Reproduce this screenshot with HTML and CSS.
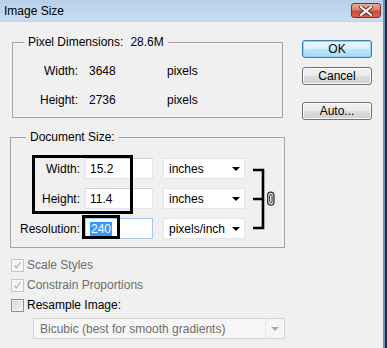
FILE: index.html
```html
<!DOCTYPE html>
<html>
<head>
<meta charset="utf-8">
<link rel="stylesheet" href="styles.css">
</head>
<body>
<div class="window">
  <div class="titlebar">
    <span class="title">Image Size</span>
    <span class="close">
      <svg width="14" height="10" viewBox="0 0 14 10">
        <path d="M2 1L12 9M12 1L2 9" stroke="#5a2a22" stroke-width="4" stroke-linecap="square"/>
        <path d="M2 1L12 9M12 1L2 9" stroke="#fff" stroke-width="2.2" stroke-linecap="square"/>
      </svg>
    </span>
  </div>
  <div class="content">
    <div class="main">
      <fieldset class="group pixdim">
        <legend>Pixel Dimensions:<span class="size">28.6M</span></legend>
        <div class="pgrid">
          <span class="lbl">Width:</span><span>3648</span><span>pixels</span>
          <span class="lbl">Height:</span><span>2736</span><span>pixels</span>
        </div>
      </fieldset>
      <fieldset class="group docsize">
        <legend>Document Size:</legend>
        <div class="dgrid">
          <span class="lbl">Width:</span>
          <div class="field">15.2</div>
          <div class="select">inches<i class="arrow"></i></div>
          <div class="link">
            <svg width="22" height="62" viewBox="0 0 22 62">
              <path d="M0 2H10V60H0M0 31H10" fill="none" stroke="#000" stroke-width="2.6"/>
              <rect x="14.6" y="24.1" width="6.4" height="13" rx="3.2" fill="#d8d8d8" stroke="#2e2e2e" stroke-width="1.2"/>
              <rect x="16.6" y="26.6" width="2.4" height="8" rx="1.2" fill="#f4f4f4" stroke="#2e2e2e" stroke-width="1"/>
            </svg>
          </div>
          <span class="lbl">Height:</span>
          <div class="field">11.4</div>
          <div class="select">inches<i class="arrow"></i></div>
          <span class="lbl">Resolution:</span>
          <div class="field focus"><span class="sel">240</span></div>
          <div class="select">pixels/inch<i class="arrow"></i></div>
        </div>
      </fieldset>
      <div class="checks">
        <label class="check disabled"><span class="cb on"><svg width="11" height="11" viewBox="0 0 11 11"><path d="M2.5 5.5L4.5 8L8.5 2" fill="none" stroke="#b4b4b4" stroke-width="1.3"/></svg></span>Scale Styles</label>
        <label class="check disabled"><span class="cb on"><svg width="11" height="11" viewBox="0 0 11 11"><path d="M2.5 5.5L4.5 8L8.5 2" fill="none" stroke="#b4b4b4" stroke-width="1.3"/></svg></span>Constrain Proportions</label>
        <label class="check"><span class="cb off"></span>Resample Image:</label>
      </div>
      <div class="combo disabled">
        <span class="combo-text">Bicubic (best for smooth gradients)</span>
        <span class="combo-btn"><i class="arrow grey"></i></span>
      </div>
    </div>
    <div class="buttons">
      <div class="btn default">OK</div>
      <div class="btn">Cancel</div>
      <div class="btn auto">Auto...</div>
    </div>
  </div>
  <div class="mark mark-wh"></div>
  <div class="mark mark-res"></div>
</div>
</body>
</html>
```
FILE: styles.css
```css
* { box-sizing: border-box; }

body {
  margin: 0;
  background: #1c3324;
  font-family: "Liberation Sans", Arial, sans-serif;
  font-size: 12px;
  color: #000;
}

.window {
  position: relative;
  width: 385px;
  height: 348px;
  background: #f0f0f0;
  border-right: 2px solid #5f95cb;
  display: flex;
  flex-direction: column;
}

.titlebar {
  flex: none;
  height: 22px;
  display: flex;
  align-items: flex-start;
  justify-content: space-between;
  padding: 3px 2px 0 4px;
  background: linear-gradient(#b7cfe8, #cbdcee);
  border-bottom: 1px solid #c4d3e2;
}

.title {
  line-height: 16px;
  color: #000;
}

.close {
  width: 30px;
  height: 15px;
  border: 1px solid #7a3528;
  border-radius: 3px;
  background: linear-gradient(#eba99a, #dc7d69 48%, #c9482f 52%, #d4644c);
  display: flex;
  align-items: center;
  justify-content: center;
}

.content {
  flex: 1;
  display: flex;
}

.main {
  width: 285px;
  flex: none;
}

.group {
  margin: 0;
  min-width: 0;
  border: 1px solid #a3a3a3;
}

.group legend {
  padding: 0 4px;
  line-height: 15px;
}

.pixdim {
  margin: 13px 0 0 12px;
  width: 271px;
  padding: 11px 0 7px 11px;
}

.size { margin-left: 7px; }

.pgrid {
  display: grid;
  grid-template-columns: 65px 78px auto;
  grid-auto-rows: 20px;
  row-gap: 9px;
  align-items: center;
}

.lbl {
  text-align: right;
  padding-right: 11px;
}

.docsize {
  margin: 12px 0 0 10px;
  width: 275px;
  padding: 13px 0 8px 9px;
}

.docsize legend { margin-left: 6px; }

.dgrid {
  display: grid;
  grid-template-columns: 65px 78px 90px 22px;
  grid-template-rows: repeat(3, 21px);
  row-gap: 9px;
  align-items: center;
}

.dgrid .lbl { padding-right: 5px; }

.field {
  width: 68px;
  height: 21px;
  background: #fff;
  border: 1px solid #e2e3ea;
  border-top-color: #c9ccd3;
  padding: 2px 4px 0;
  line-height: 16px;
}

.field.focus {
  border-color: #a8c8ea;
  padding-left: 4px;
}

.sel {
  display: inline-block;
  background: #3399ff;
  color: #fff;
  padding: 0 1px;
  line-height: 15px;
}

.select {
  width: 82px;
  height: 21px;
  background: #fff;
  border: 1px solid #e4e4e4;
  display: flex;
  align-items: center;
  justify-content: space-between;
  padding: 0 4px 0 5px;
}

.arrow {
  width: 0;
  height: 0;
  border-left: 4px solid transparent;
  border-right: 4px solid transparent;
  border-top: 4px solid #000;
}

.arrow.grey { border-top-color: #a8a8a8; }

.link {
  grid-column: 4;
  grid-row: 1 / 4;
  align-self: center;
  height: 62px;
}

.link svg { display: block; }

.checks {
  margin-top: 7px;
  display: flex;
  flex-direction: column;
}

.check {
  height: 20px;
  display: flex;
  align-items: center;
  padding-left: 11px;
}

.check.disabled { color: #6d6d6d; }

.cb {
  width: 13px;
  height: 13px;
  margin-right: 3px;
  display: flex;
  align-items: center;
  justify-content: center;
}

.cb.on {
  border: 1px solid #c5c5c5;
  background: #f6f6f6;
}

.cb.off {
  border: 1px solid #8e8f8f;
  background: linear-gradient(135deg, #d2d2d2, #f8f8f8);
  box-shadow: inset 0 0 0 1px #f2f2f2;
}

.combo {
  margin: 3px 0 0 33px;
  width: 252px;
  height: 21px;
  border: 1px solid #d5d5d5;
  background: #f6f6f6;
  display: flex;
  align-items: center;
  color: #6d6d6d;
}

.combo-text {
  flex: 1;
  padding-left: 6px;
}

.combo-btn {
  width: 19px;
  height: 100%;
  border-left: 1px solid #e6e6e6;
  display: flex;
  align-items: center;
  justify-content: center;
}

.buttons {
  margin-left: 17px;
  padding-top: 18px;
  display: flex;
  flex-direction: column;
}

.btn {
  width: 70px;
  height: 18px;
  border: 1px solid #707070;
  border-radius: 3px;
  background: linear-gradient(#f2f2f2, #ebebeb 48%, #dddddd 52%, #cfcfcf);
  box-shadow: inset 0 0 0 1px #fbfbfb;
  text-align: center;
  line-height: 16px;
  margin-bottom: 9px;
}

.btn.default {
  border-color: #3c7fb1;
  background: linear-gradient(#eaf6fd, #d9f0fc 48%, #bee6fd 52%, #a7d9f5);
  box-shadow: inset 0 0 0 1px #8ed0f2;
}

.btn.auto { margin-top: 8px; }

.mark {
  position: absolute;
  border: 3px solid #000;
}

.mark-wh {
  left: 32px;
  top: 155px;
  width: 101px;
  height: 59px;
}

.mark-res {
  left: 82px;
  top: 215px;
  width: 38px;
  height: 24px;
}
```
